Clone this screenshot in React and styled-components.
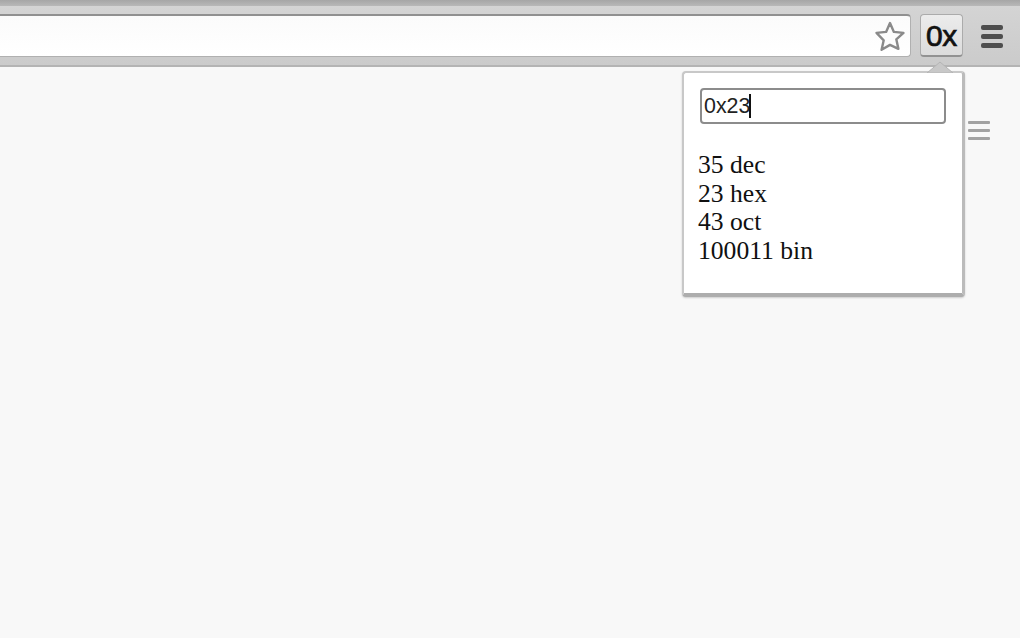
import styled, { createGlobalStyle } from 'styled-components'

const GlobalStyle = createGlobalStyle`
  html, body {
    margin: 0;
    padding: 0;
    height: 100%;
    overflow: hidden;
    background: #f8f8f8;
  }
`

const Window = styled.div`
  position: relative;
  width: 1020px;
  height: 638px;
  overflow: hidden;
  background: #f8f8f8;
`

const TitleEdge = styled.div`
  height: 6px;
  background: linear-gradient(#a6a6a6, #b8b8b8);
`

const Toolbar = styled.div`
  display: flex;
  align-items: flex-start;
  height: 61px;
  box-sizing: border-box;
  padding-top: 8px;
  background: linear-gradient(#d4d4d4, #cbcbcb);
  border-bottom: 2px solid #b4b4b4;
`

const AddressBar = styled.div`
  display: flex;
  align-items: center;
  justify-content: flex-end;
  width: 911px;
  height: 43px;
  box-sizing: border-box;
  padding-right: 4px;
  background: linear-gradient(#fbfbfb, #ffffff);
  border: 1px solid #b0b0b0;
  border-top: 2px solid #909090;
  border-left: none;
  border-radius: 0 4px 4px 0;
`

const ExtensionButton = styled.div`
  display: flex;
  align-items: center;
  justify-content: center;
  width: 43px;
  height: 43px;
  box-sizing: border-box;
  margin-left: 9px;
  padding-top: 2px;
  background: linear-gradient(#ececec, #dcdcdc);
  border: 1px solid #ababab;
  border-bottom: 2px solid #929292;
  border-radius: 4px;
  font-family: 'Liberation Sans', Arial, sans-serif;
  font-size: 30px;
  letter-spacing: -0.3px;
  -webkit-text-stroke: 0.7px #111111;
  color: #111111;
`

const MenuButton = styled.div`
  display: flex;
  flex-direction: column;
  gap: 4px;
  width: 22px;
  margin: 11px 0 0 18px;
`

const MenuBar = styled.span`
  display: block;
  height: 5px;
  border-radius: 2px;
  background: #4e4e4e;
`

const PageContent = styled.div`
  display: flex;
  justify-content: flex-end;
  padding: 54px 30px 0 0;
`

const PageMenu = styled.div`
  display: flex;
  flex-direction: column;
  gap: 5px;
  width: 22px;
`

const PageMenuBar = styled.span`
  display: block;
  height: 3px;
  border-radius: 1px;
  background: #a2a2a2;
`

const Popup = styled.div`
  position: absolute;
  left: 682px;
  top: 71px;
  width: 283px;
  height: 226px;
  box-sizing: border-box;
  padding: 15px 14px 0;
  background: #ffffff;
  border: 2px solid #c8c8c8;
  border-bottom: 4px solid #adadad;
  border-right: 3px solid #bbbbbb;
  border-radius: 4px;
  box-shadow: 0 1px 2px rgba(0, 0, 0, 0.18);
`

const PopupArrow = styled.svg`
  position: absolute;
  left: 242px;
  top: -13px;
  width: 28px;
  height: 13px;
`

const NumberInput = styled.div`
  display: flex;
  align-items: center;
  width: 246px;
  height: 36px;
  box-sizing: border-box;
  margin-left: 2px;
  padding-left: 2px;
  border: 2px solid #8c8c8c;
  border-radius: 4px;
  font-family: 'Liberation Sans', Arial, sans-serif;
  font-size: 21.4px;
  color: #222222;
`

const Caret = styled.span`
  display: block;
  width: 2px;
  height: 24px;
  margin-left: -1px;
  background: #111111;
`

const Results = styled.div`
  margin-top: 27px;
  font-family: 'Liberation Serif', 'Times New Roman', serif;
  font-size: 25.6px;
  line-height: 28.7px;
  color: #101010;
`

const StarIcon = () => (
  <svg width='32' height='32' viewBox='0 0 32 32'>
    <path
      d='M16 3l3.900 8.900 9.600 1-7.200 6.400 2.100 9.500L16 24.900 7.600 29.800l2.100-9.500L2.500 12.900l9.600-1z'
      fill='#fdfdfd'
      stroke='#8a8a8a'
      strokeWidth='2.400'
      strokeLinejoin='round'
    />
  </svg>
)

const App = () => {
  return (
    <Window>
      <GlobalStyle />
      <TitleEdge />
      <Toolbar>
        <AddressBar>
          <StarIcon />
        </AddressBar>
        <ExtensionButton>0x</ExtensionButton>
        <MenuButton>
          <MenuBar />
          <MenuBar />
          <MenuBar />
        </MenuButton>
      </Toolbar>
      <PageContent>
        <PageMenu>
          <PageMenuBar />
          <PageMenuBar />
          <PageMenuBar />
        </PageMenu>
      </PageContent>
      <Popup>
        <PopupArrow viewBox='0 0 28 13'>
          <path d='M1 13L14 2l13 11z' fill='#c8c8c8' stroke='#b4b4b4' strokeWidth='1' />
        </PopupArrow>
        <NumberInput>
          0x23
          <Caret />
        </NumberInput>
        <Results>
          <div>35 dec</div>
          <div>23 hex</div>
          <div>43 oct</div>
          <div>100011 bin</div>
        </Results>
      </Popup>
    </Window>
  )
}

export default App
